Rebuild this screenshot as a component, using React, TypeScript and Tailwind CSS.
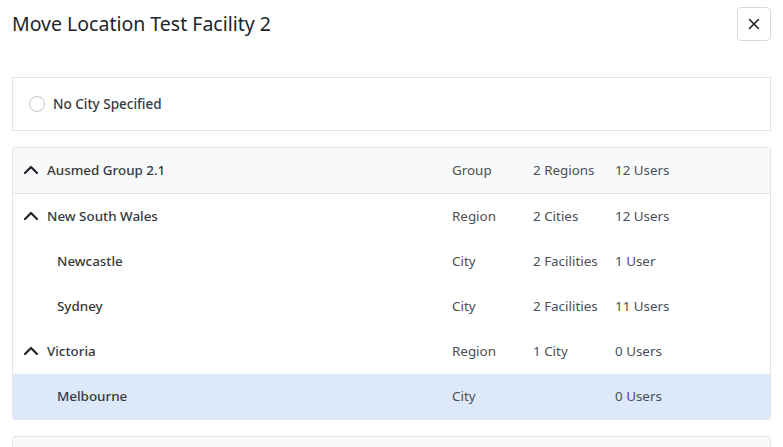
import React from "react";

type Row = {
  name: string;
  level: 0 | 1 | 2;
  type: string;
  count: string;
  users: string;
  header?: boolean;
  selected?: boolean;
};

const rows: Row[] = [
  { name: "Ausmed Group 2.1", level: 0, type: "Group", count: "2 Regions", users: "12 Users", header: true },
  { name: "New South Wales", level: 1, type: "Region", count: "2 Cities", users: "12 Users" },
  { name: "Newcastle", level: 2, type: "City", count: "2 Facilities", users: "1 User" },
  { name: "Sydney", level: 2, type: "City", count: "2 Facilities", users: "11 Users" },
  { name: "Victoria", level: 1, type: "Region", count: "1 City", users: "0 Users" },
  { name: "Melbourne", level: 2, type: "City", count: "", users: "0 Users", selected: true },
];

function Chevron() {
  return (
    <svg width="16" height="12" viewBox="0 0 16 12" className="shrink-0">
      <path d="M2 9 L8 3 L14 9" fill="none" stroke="#1f2328" strokeWidth="2.2" strokeLinecap="round" strokeLinejoin="round" />
    </svg>
  );
}

export default function App() {
  return (
    <div
      className="w-[783px] h-[447px] overflow-hidden bg-white px-3 text-[#212529]"
      style={{ fontFamily: '"Noto Sans", "Open Sans", sans-serif' }}
    >
      <div className="flex items-center justify-between h-[48px]">
        <h1 className="text-[19.5px] font-normal leading-none text-[#212529]">Move Location Test Facility 2</h1>
        <button className="w-[34px] h-[34px] flex items-center justify-center rounded border border-[#d6d9dd] bg-white">
          <svg width="12" height="12" viewBox="0 0 12 12">
            <path d="M1.5 1.5 L10.5 10.5 M10.5 1.5 L1.5 10.5" stroke="#212529" strokeWidth="1.6" strokeLinecap="round" />
          </svg>
        </button>
      </div>

      <div className="mt-[29px] h-[54px] border border-[#e1e4e8] flex items-center pl-[16px] gap-[8px]">
        <span className="w-[16px] h-[16px] rounded-full border border-[#c4c8cd] bg-white" />
        <span className="text-[13.5px] font-medium text-[#343a40]">No City Specified</span>
      </div>

      <div className="mt-[16px] border border-[#e1e4e8] rounded-[3px] overflow-hidden">
        {rows.map((r) => (
          <div
            key={r.name}
            className={
              "flex items-center text-[13.4px] " +
              (r.header
                ? "h-[46px] bg-[#f8f9fa] border-b border-[#e1e4e8]"
                : r.selected
                ? "h-[45px] bg-[#dde8f8]"
                : "h-[45px] bg-white")
            }
          >
            <div
              className={
                "w-[439px] flex items-center gap-[8px] " +
                (r.level === 2 ? "pl-[44px]" : "pl-[10px]")
              }
            >
              {r.level !== 2 && <Chevron />}
              <span className="font-medium text-[#343a40]">{r.name}</span>
            </div>
            <div className="w-[81px] text-[#495057]">{r.type}</div>
            <div className="w-[82px] text-[#495057]">{r.count}</div>
            <div className="flex-1 text-[#495057]">{r.users}</div>
          </div>
        ))}
      </div>

      <div className="mt-[16px] h-[40px] border border-[#e1e4e8] rounded-[3px] bg-[#f8f9fa]" />
    </div>
  );
}
